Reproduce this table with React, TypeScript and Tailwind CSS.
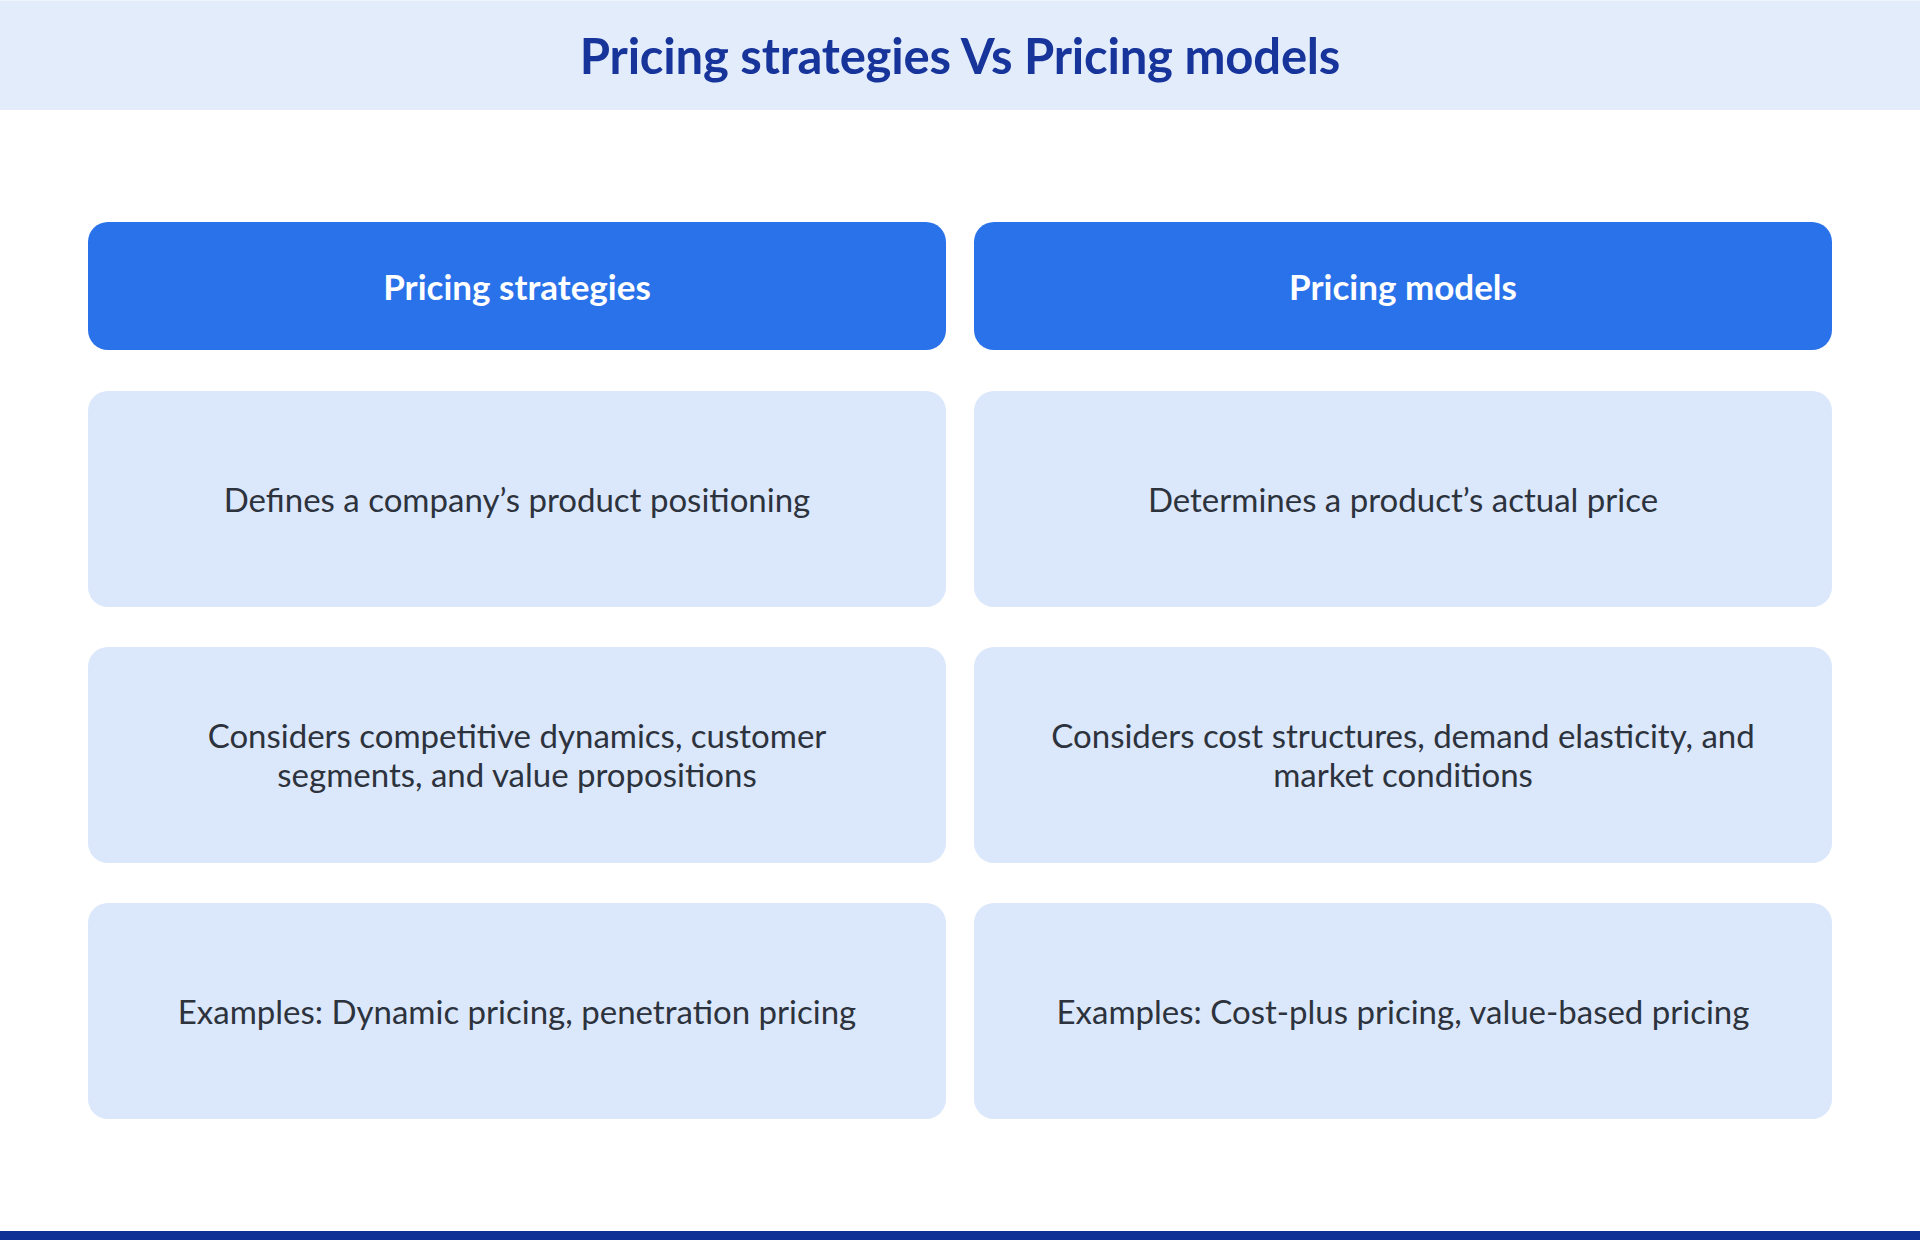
import React from "react";

const rows: [string, string][] = [
  ["Defines a company\u2019s product positioning", "Determines a product\u2019s actual price"],
  [
    "Considers competitive dynamics, customer segments, and value propositions",
    "Considers cost structures, demand elasticity, and market conditions",
  ],
  ["Examples: Dynamic pricing, penetration pricing", "Examples: Cost-plus pricing, value-based pricing"],
];

function Body({ text }: { text: string }) {
  return (
    <div className="h-[216px] rounded-[20px] bg-[#dbe7fb] flex items-center justify-center px-[70px] text-center">
      <p className="text-[33px] leading-[39px] text-[#2d333d]">{text}</p>
    </div>
  );
}

export default function App() {
  return (
    <div
      className="w-[1920px] h-[1240px] bg-white flex flex-col"
      style={{ fontFamily: "Lato, 'Open Sans', sans-serif" }}
    >
      <div className="h-[110px] bg-[#e2ecfb] flex items-center justify-center border-t border-[#eef3fc]">
        <h1 className="text-[49px] font-bold text-[#17349b] tracking-[-0.2px]">
          Pricing strategies Vs Pricing models
        </h1>
      </div>
      <div className="flex-1 px-[88px] pt-[112px]">
        <div className="grid grid-cols-2 gap-x-[28px]">
          <div className="h-[128px] rounded-[20px] bg-[#2a72ea] flex items-center justify-center">
            <span className="text-[35px] font-bold text-white">Pricing strategies</span>
          </div>
          <div className="h-[128px] rounded-[20px] bg-[#2a72ea] flex items-center justify-center">
            <span className="text-[35px] font-bold text-white">Pricing models</span>
          </div>
        </div>
        <div className="grid grid-cols-2 gap-x-[28px] gap-y-[40px] mt-[41px]">
          {rows.map(([a, b], i) => (
            <React.Fragment key={i}>
              <Body text={a} />
              <Body text={b} />
            </React.Fragment>
          ))}
        </div>
      </div>
      <div className="h-[9px] bg-[#0f3196]" />
    </div>
  );
}
